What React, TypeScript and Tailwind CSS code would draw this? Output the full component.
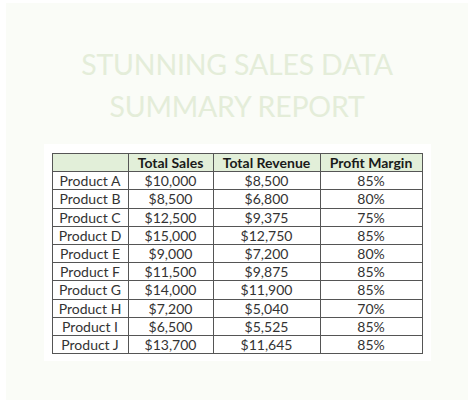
import React from 'react';

const rows: Array<[string, string, string, string]> = [
  ['Product A', '$10,000', '$8,500', '85%'],
  ['Product B', '$8,500', '$6,800', '80%'],
  ['Product C', '$12,500', '$9,375', '75%'],
  ['Product D', '$15,000', '$12,750', '85%'],
  ['Product E', '$9,000', '$7,200', '80%'],
  ['Product F', '$11,500', '$9,875', '85%'],
  ['Product G', '$14,000', '$11,900', '85%'],
  ['Product H', '$7,200', '$5,040', '70%'],
  ['Product I', '$6,500', '$5,525', '85%'],
  ['Product J', '$13,700', '$11,645', '85%'],
];

const cell = 'border border-[#555] p-0 h-[18.2px] leading-[17px] text-center';

export default function App() {
  return (
    <div className="w-[474px] h-[400px] bg-white pt-[3px] px-[6px] font-['Lato','Liberation_Sans',sans-serif]">
      <div className="h-[397px] bg-[#fafcf7] flex flex-col items-center">
        <h1 className="mt-[40px] text-[28.5px] leading-[42px] font-normal text-[#e4edd9] text-center tracking-[-0.2px]">
          STUNNING SALES DATA
          <br />
          SUMMARY REPORT
        </h1>
        <div className="mt-[17px] bg-white px-[8px] pt-[9px] pb-[7px]">
          <table className="border-collapse text-[14px] text-[#333]">
            <colgroup>
              <col className="w-[76px]" />
              <col className="w-[85px]" />
              <col className="w-[107px]" />
              <col className="w-[102px]" />
            </colgroup>
            <thead>
              <tr className="bg-[#e2efd9]">
                <th className={cell}></th>
                <th className={`${cell} font-bold text-[#1a1a1a]`}>Total Sales</th>
                <th className={`${cell} font-bold text-[#1a1a1a]`}>Total Revenue</th>
                <th className={`${cell} font-bold text-[#1a1a1a]`}>Profit Margin</th>
              </tr>
            </thead>
            <tbody>
              {rows.map((r) => (
                <tr key={r[0]}>
                  {r.map((v, i) => (
                    <td key={i} className={cell}>
                      {v}
                    </td>
                  ))}
                </tr>
              ))}
            </tbody>
          </table>
        </div>
      </div>
    </div>
  );
}
